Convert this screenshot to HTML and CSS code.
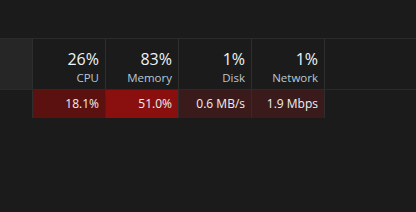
FILE: index.html
```html
<!DOCTYPE html>
<html>
<head>
<meta charset="utf-8">
<link rel="stylesheet" href="styles.css">
</head>
<body>
<div class="top"></div>
<div class="header">
  <div class="side"></div>
  <div class="col"><div class="pct">26%</div><div class="lbl">CPU</div></div>
  <div class="col"><div class="pct">83%</div><div class="lbl">Memory</div></div>
  <div class="col"><div class="pct">1%</div><div class="lbl">Disk</div></div>
  <div class="col last"><div class="pct">1%</div><div class="lbl">Network</div></div>
</div>
<div class="row">
  <div class="side blank"></div>
  <div class="cell cpu">18.1%</div>
  <div class="cell mem">51.0%</div>
  <div class="cell low">0.6 MB/s</div>
  <div class="cell low last">1.9 Mbps</div>
</div>
</body>
</html>
```
FILE: styles.css
```css
html, body {
  margin: 0;
  padding: 0;
  background: #1b1b1b;
  width: 416px;
  height: 212px;
  overflow: hidden;
  font-family: "Open Sans", "Noto Sans", sans-serif;
}
.top {
  height: 38px;
}
.header {
  display: flex;
  border-top: 1px solid #2b2b2b;
  border-bottom: 1px solid #2b2b2b;
  height: 50px;
}
.side {
  width: 32px;
  background: #262626;
}
.side.blank {
  background: transparent;
}
.col {
  border-left: 1px solid #2e2e2e;
  display: flex;
  flex-direction: column;
  align-items: flex-end;
  padding-right: 6px;
  width: 66px;
}
.last {
  border-right: 1px solid #2e2e2e;
}
.pct {
  font-size: 16px;
  color: #eef3f8;
  margin-top: 10px;
  line-height: 20px;
}
.lbl {
  font-size: 11.5px;
  color: #b9c8d4;
  line-height: 16px;
  margin-top: 1px;
}
.row {
  display: flex;
  height: 28px;
}
.cell {
  width: 66px;
  padding-right: 6px;
  border-left: 1px solid #2e2e2e;
  font-size: 12px;
  color: #f0f0f0;
  text-align: right;
  line-height: 28px;
}
.cpu { background: #5c1111; }
.mem { background: #8a1010; }
.low { background: #3b1a1c; }
```
